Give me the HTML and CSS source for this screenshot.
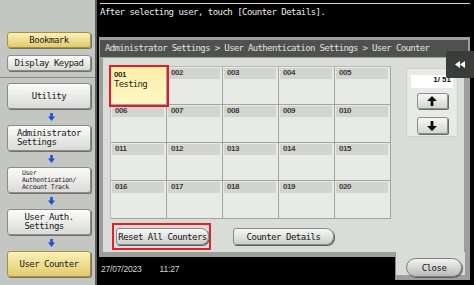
FILE: index.html
```html
<!DOCTYPE html>
<html>
<head>
    <title>User Counter</title>
    <link rel="stylesheet" href="styles.css">
</head>
<body>
    <div class="screen">
        <div class="sidebar">
            <div class="quick">
                <div class="side-btn yellow">Bookmark</div>
                <div class="side-btn">Display Keypad</div>
            </div>
            <div class="nav">
                <div class="side-btn nav-btn">Utility</div>
                <div class="arrow"><svg width="7" height="8" viewBox="0 0 7 8"><rect x="2.2" y="0" width="2.6" height="4" fill="#1f4fd6"/><polygon points="0,3.5 7,3.5 3.5,8" fill="#1f4fd6"/></svg></div>
                <div class="side-btn nav-btn"><span class="lines">Administrator<br>Settings</span></div>
                <div class="arrow"><svg width="7" height="8" viewBox="0 0 7 8"><rect x="2.2" y="0" width="2.6" height="4" fill="#1f4fd6"/><polygon points="0,3.5 7,3.5 3.5,8" fill="#1f4fd6"/></svg></div>
                <div class="side-btn nav-btn"><span class="lines small">User<br>Authentication/<br>Account Track</span></div>
                <div class="arrow"><svg width="7" height="8" viewBox="0 0 7 8"><rect x="2.2" y="0" width="2.6" height="4" fill="#1f4fd6"/><polygon points="0,3.5 7,3.5 3.5,8" fill="#1f4fd6"/></svg></div>
                <div class="side-btn nav-btn"><span class="lines">User Auth.<br>Settings</span></div>
                <div class="arrow"><svg width="7" height="8" viewBox="0 0 7 8"><rect x="2.2" y="0" width="2.6" height="4" fill="#1f4fd6"/><polygon points="0,3.5 7,3.5 3.5,8" fill="#1f4fd6"/></svg></div>
                <div class="side-btn nav-btn yellow">User Counter</div>
            </div>
        </div>

        <div class="main">
            <div class="message">
                <div class="msg-line">After selecting user, touch [Counter Details].</div>
            </div>

            <div class="panel">
                <div class="header">Administrator Settings &gt; User Authentication Settings &gt; User Counter</div>
                <div class="content">
                    <div class="grid-row">
                        <div class="grid">
                            <div class="cell selected"><div class="sel-num">001</div><div class="sel-name">Testing</div></div>
                            <div class="cell"><div class="label">002</div></div>
                            <div class="cell"><div class="label">003</div></div>
                            <div class="cell"><div class="label">004</div></div>
                            <div class="cell"><div class="label">005</div></div>
                            <div class="cell"><div class="label">006</div></div>
                            <div class="cell"><div class="label">007</div></div>
                            <div class="cell"><div class="label">008</div></div>
                            <div class="cell"><div class="label">009</div></div>
                            <div class="cell"><div class="label">010</div></div>
                            <div class="cell"><div class="label">011</div></div>
                            <div class="cell"><div class="label">012</div></div>
                            <div class="cell"><div class="label">013</div></div>
                            <div class="cell"><div class="label">014</div></div>
                            <div class="cell"><div class="label">015</div></div>
                            <div class="cell"><div class="label">016</div></div>
                            <div class="cell"><div class="label">017</div></div>
                            <div class="cell"><div class="label">018</div></div>
                            <div class="cell"><div class="label">019</div></div>
                            <div class="cell"><div class="label">020</div></div>
                        </div>
                        <div class="pager">
                            <div class="page-num">1/ 51</div>
                            <div class="page-btn"><svg width="10" height="10" viewBox="0 0 10 10"><polygon points="5,0 0,5 3.6,5 3.6,10 6.4,10 6.4,5 10,5" fill="#111"/></svg></div>
                            <div class="page-btn down"><svg width="10" height="10" viewBox="0 0 10 10"><polygon points="5,10 0,5 3.6,5 3.6,0 6.4,0 6.4,5 10,5" fill="#111"/></svg></div>
                        </div>
                    </div>
                    <div class="actions">
                        <div class="highlight"><div class="pill">Reset All Counters</div></div>
                        <div class="pill details">Counter Details</div>
                    </div>
                </div>
            </div>

            <div class="status">
                <div class="clock"><span class="date">27/07/2023</span><span>11:27</span></div>
                <div class="close-tab"><div class="close-btn">Close</div></div>
            </div>

            <div class="collapse-tab"><svg width="10" height="7" viewBox="0 0 10 7"><polygon points="5,0 0,3.5 5,7" fill="#fff"/><polygon points="10,0 5,3.5 10,7" fill="#fff"/></svg></div>
        </div>
    </div>
</body>
</html>
```

FILE: styles.css
```css
body {
    margin: 0;
    background: #000;
    font-family: "DejaVu Sans Mono", "Liberation Mono", monospace;
}
.screen {
    display: grid;
    grid-template-columns: 97px 377px;
    width: 474px;
    height: 285px;
    overflow: hidden;
}

/* left column */
.sidebar {
    background: #c4c6c2;
    border-right: 2px solid #5e605c;
}
.quick {
    display: flex;
    flex-direction: column;
    gap: 7px;
    padding: 32px 0 6px 7px;
    border-bottom: 1px solid #8c8e8a;
}
.nav {
    display: flex;
    flex-direction: column;
    padding: 5px 0 0 7px;
}
.side-btn {
    box-sizing: border-box;
    width: 84px;
    height: 16px;
    display: flex;
    align-items: center;
    justify-content: center;
    border: 1px solid #8a8c88;
    border-radius: 3px;
    background: linear-gradient(#fbfbf9, #dadad8);
    box-shadow: 1px 1px 0 #70726e;
    color: #1a1a1a;
    font-size: 9px;
    letter-spacing: -0.5px;
}
.side-btn.yellow {
    background: linear-gradient(#fbf1b8, #e3cb6c);
    border-color: #a89038;
}
.nav-btn {
    height: 26px;
}
.lines {
    text-align: left;
    line-height: 9px;
}
.lines.small {
    font-size: 6.5px;
    line-height: 7px;
    letter-spacing: -0.3px;
}
.arrow {
    height: 16px;
    display: flex;
    align-items: center;
    justify-content: center;
}

/* right column */
.main {
    position: relative;
    display: flex;
    flex-direction: column;
}
.message {
    box-sizing: border-box;
    height: 37px;
    padding: 3px 4px 0 3px;
}
.msg-line {
    border-top: 1px solid #ddd8a0;
    padding-top: 3px;
    color: #ececec;
    font-size: 9px;
    letter-spacing: -0.52px;
}
.panel {
    box-sizing: border-box;
    width: 371px;
    height: 220px;
    margin-left: 2px;
    padding: 3px 2px 0 1px;
    background: #9d9f9b;
}
.header {
    height: 17px;
    line-height: 17px;
    padding-left: 5px;
    background: #4f514f;
    color: #e2e2e2;
    font-size: 9px;
    letter-spacing: -0.65px;
    white-space: nowrap;
}
.content {
    box-sizing: border-box;
    height: 194px;
    margin: 1px 4px 0 3px;
    padding: 8px 0 0 7px;
    background: #dadcd8;
}
.grid-row {
    display: flex;
    align-items: flex-start;
}
.grid {
    display: grid;
    grid-template-columns: repeat(5, 56px);
    grid-auto-rows: 38px;
    border-top: 1px solid #b8bab6;
    border-left: 1px solid #b8bab6;
}
.cell {
    box-sizing: border-box;
    padding: 1px 2px 0 1px;
    background: #e8eae6;
    border-right: 1px solid #a2a4a0;
    border-bottom: 1px solid #a2a4a0;
}
.label {
    height: 11px;
    line-height: 11px;
    padding-left: 3px;
    background: #d2d4d0;
    color: #3a3a3a;
    font: bold 8px "Liberation Sans", sans-serif;
    letter-spacing: -0.5px;
}
.cell.selected {
    position: relative;
    z-index: 1;
    padding: 3px 3px 0 3px;
    background: linear-gradient(#fcefa6, #fff7c6);
    outline: 2px solid #e01c2c;
}
.sel-num {
    color: #2a2a2a;
    font: bold 8px "Liberation Sans", sans-serif;
    letter-spacing: -0.5px;
    line-height: 9px;
}
.sel-name {
    color: #1e1e1e;
    font-size: 9px;
    letter-spacing: -0.7px;
    line-height: 11px;
}
.pager {
    box-sizing: border-box;
    width: 52px;
    height: 69px;
    margin: 2px 0 0 15px;
    padding-top: 6px;
    display: flex;
    flex-direction: column;
    align-items: center;
    background: #e8eae6;
    border: 1px solid #cdcfcb;
}
.page-num {
    box-sizing: border-box;
    width: 42px;
    height: 13px;
    line-height: 13px;
    padding-right: 2px;
    text-align: right;
    background: #fff;
    color: #111;
    font: bold 8px "Liberation Sans", sans-serif;
    white-space: pre;
}
.page-btn {
    box-sizing: border-box;
    width: 31px;
    height: 16px;
    margin-top: 5px;
    display: flex;
    align-items: center;
    justify-content: center;
    border: 1px solid #8e908c;
    border-radius: 2px;
    background: linear-gradient(#f8f8f6, #d4d6d2);
    box-shadow: 1px 1px 0 #6a6c68;
}
.page-btn.down {
    height: 17px;
    margin-top: 8px;
}
.actions {
    display: flex;
    align-items: center;
    margin: 4px 0 0 2px;
}
.highlight {
    box-sizing: border-box;
    width: 99px;
    height: 27px;
    padding-left: 2px;
    display: flex;
    align-items: center;
    border: 2px solid #e0202c;
}
.pill {
    box-sizing: border-box;
    width: 94px;
    height: 17px;
    display: flex;
    align-items: center;
    justify-content: center;
    border: 1px solid #8a8c88;
    border-radius: 3px 8px 8px 3px;
    background: linear-gradient(#f7f7f5, #cdcfcb);
    box-shadow: 1px 1px 0 #5a5c58;
    color: #151515;
    font-size: 9px;
    letter-spacing: -0.5px;
}
.pill.details {
    width: 101px;
    margin-left: 22px;
}
.status {
    display: flex;
    height: 28px;
}
.clock {
    flex: 1;
    padding: 7px 0 0 4px;
    color: #d6d6d6;
    font: 8.5px "Liberation Sans", sans-serif;
    letter-spacing: -0.2px;
}
.clock .date {
    margin-right: 18px;
}
.close-tab {
    box-sizing: border-box;
    width: 75px;
    height: 28px;
    margin: -5px 4px 0 0;
    padding: 6px 0 0 10px;
    background: #dadcd8;
    border-right: 5px solid #9d9f9b;
    border-bottom: 5px solid #9d9f9b;
    border-left: 1px solid #8a8c88;
}
.close-btn {
    box-sizing: border-box;
    width: 56px;
    height: 19px;
    display: flex;
    align-items: center;
    justify-content: center;
    border: 1px solid #7c7e7a;
    border-radius: 10px;
    background: linear-gradient(#f4f4f2, #b9bbb7);
    box-shadow: 1px 1px 0 #5a5c58;
    color: #151515;
    font-size: 9px;
    letter-spacing: -0.5px;
}
.collapse-tab {
    position: absolute;
    left: 349px;
    top: 51px;
    width: 28px;
    height: 27px;
    display: flex;
    align-items: center;
    justify-content: center;
    background: #3a3c3a;
    border-radius: 2px 0 0 2px;
}
```
